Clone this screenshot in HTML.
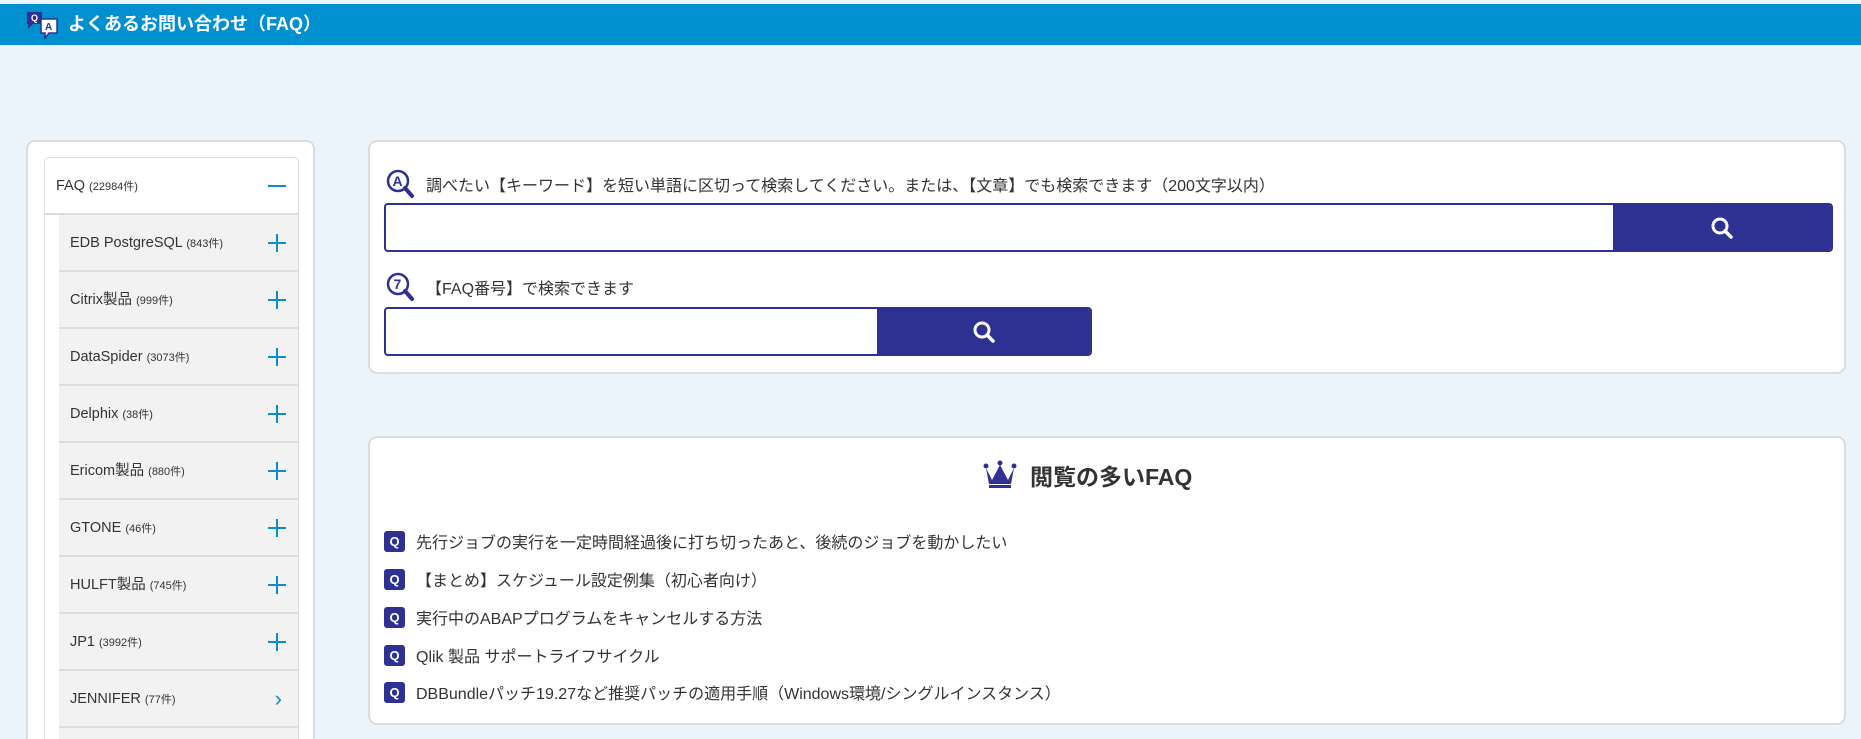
<!DOCTYPE html>
<html><head><meta charset="utf-8"><style>
*{box-sizing:border-box;margin:0;padding:0}
html,body{width:1861px;height:739px;overflow:hidden}
body{background:#ecf4fb;font-family:"Liberation Sans","Noto Sans CJK JP",sans-serif;color:#333}
#wrap{position:relative;width:1861px;height:739px;overflow:hidden}
.hdr{position:absolute;left:0;top:4px;width:1861px;height:41px;background:#008fcf;color:#fff;font-weight:bold;font-size:18px;line-height:41px;padding-left:68px}
.hdr svg{position:absolute;left:26px;top:7px}
.side{position:absolute;left:26px;top:140px;width:289px;height:599px;background:#fff;border:2px solid #dcdcdc;border-bottom:none;border-radius:9px 9px 0 0;overflow:hidden}
.inner{position:absolute;left:16px;top:15px;width:255px;height:590px;border:1px solid #ddd;border-bottom:none;border-radius:5px 5px 0 0;overflow:hidden}
.row{position:relative;height:57px;line-height:56px;font-size:14.5px;border-bottom:2px solid #ddd;padding-left:11px;background:#fff}
.sub{margin-left:14px;background:#f2f2f2;padding-left:11px}
.row small{font-size:11px}
.ic{position:absolute;right:12px;top:14px;width:18px;height:28px}
.ic::before{content:"";position:absolute;left:0;top:13px;width:18px;height:2px;background:#0a8ccf}
.pl::after{content:"";position:absolute;left:8px;top:5px;width:2px;height:18px;background:#0a8ccf}
.ch{position:absolute;right:16px;top:0;color:#0a8ccf;font-size:22px}
.card{position:absolute;left:368px;width:1478px;background:#fff;border:2px solid #dcdcdc;border-radius:9px}
.lbl{position:absolute;left:16px;font-size:16px;display:flex;align-items:center}
.lbl svg{margin-right:10px}
.inp{position:absolute;left:14px;height:49px;border:2px solid #2e3192;border-radius:4px;background:#fff;overflow:hidden}
.btn{position:absolute;right:0;top:0;bottom:0;background:#2e3192;display:flex;align-items:center;justify-content:center}
.q{position:absolute;left:14px;font-size:16px;display:flex;align-items:center}
.q b{display:inline-block;width:21px;height:21px;background:#2e3192;color:#fff;border-radius:3px;font-size:13px;text-align:center;line-height:21px;margin-right:11px}
</style></head><body><div id="wrap">
<div class="hdr"><svg width="36" height="30" viewBox="0 0 36 30"><path d="M1 1h15v12H7l-5 5V13H1z" fill="#2e3192"/><text x="5" y="10" font-size="9" fill="#fff" font-family="Liberation Sans" font-weight="bold">Q</text><path d="M15 8h16v14h-8l-4 5v-5h-4z" fill="#fff" stroke="#2e3192" stroke-width="1.5"/><text x="19" y="19" font-size="10" fill="#2e3192" font-family="Liberation Sans" font-weight="bold">A</text></svg>よくあるお問い合わせ（FAQ）</div>

<div class="side"><div class="inner">
<div class="row">FAQ <small>(22984件)</small><span class="ic"></span></div>
<div class="row sub">EDB PostgreSQL <small>(843件)</small><span class="ic pl"></span></div>
<div class="row sub">Citrix製品 <small>(999件)</small><span class="ic pl"></span></div>
<div class="row sub">DataSpider <small>(3073件)</small><span class="ic pl"></span></div>
<div class="row sub">Delphix <small>(38件)</small><span class="ic pl"></span></div>
<div class="row sub">Ericom製品 <small>(880件)</small><span class="ic pl"></span></div>
<div class="row sub">GTONE <small>(46件)</small><span class="ic pl"></span></div>
<div class="row sub">HULFT製品 <small>(745件)</small><span class="ic pl"></span></div>
<div class="row sub">JP1 <small>(3992件)</small><span class="ic pl"></span></div>
<div class="row sub">JENNIFER <small>(77件)</small><span class="ch">›</span></div>
<div class="row sub" style="height:60px;border-bottom:none"></div>
</div></div>

<div class="card" style="top:140px;height:234px">
<div class="lbl" style="top:27px"><svg width="30" height="30" viewBox="0 0 30 30"><circle cx="12" cy="12" r="10" fill="#fff" stroke="#2e3192" stroke-width="2.5"/><text x="6.5" y="17" font-size="14" font-weight="bold" fill="#2e3192" font-family="Liberation Sans">A</text><path d="M19 19l7 8" stroke="#2e3192" stroke-width="4" stroke-linecap="round"/></svg>調べたい【キーワード】を短い単語に区切って検索してください。または、【文章】でも検索できます（200文字以内）</div>
<div class="inp" style="top:61px;width:1449px"><div class="btn" style="width:218px"><svg width="24" height="24" viewBox="0 0 24 24"><circle cx="10" cy="10" r="7" fill="none" stroke="#fff" stroke-width="3"/><path d="M15 15l6 6" stroke="#fff" stroke-width="3.5" stroke-linecap="round"/></svg></div></div>
<div class="lbl" style="top:130px"><svg width="30" height="30" viewBox="0 0 30 30"><circle cx="12" cy="12" r="10" fill="#fff" stroke="#2e3192" stroke-width="2.5"/><text x="7.5" y="17" font-size="14" font-weight="bold" fill="#2e3192" font-family="Liberation Sans">7</text><path d="M19 19l7 8" stroke="#2e3192" stroke-width="4" stroke-linecap="round"/></svg>【FAQ番号】で検索できます</div>
<div class="inp" style="top:165px;width:708px"><div class="btn" style="width:213px"><svg width="24" height="24" viewBox="0 0 24 24"><circle cx="10" cy="10" r="7" fill="none" stroke="#fff" stroke-width="3"/><path d="M15 15l6 6" stroke="#fff" stroke-width="3.5" stroke-linecap="round"/></svg></div></div>
</div>

<div class="card" style="top:436px;height:289px">
<div style="position:absolute;left:613px;top:20px;display:flex;align-items:center;font-size:23px;font-weight:bold;color:#333"><svg width="34" height="30" viewBox="0 0 34 30" style="margin-right:13px"><circle cx="3" cy="6" r="2.5" fill="#2e3192"/><circle cx="17" cy="3" r="2.5" fill="#2e3192"/><circle cx="31" cy="6" r="2.5" fill="#2e3192"/><path d="M3 8l6 12 8-15 8 15 6-12-3 16H6z" fill="#2e3192"/><rect x="6" y="25" width="22" height="3" fill="#2e3192"/></svg>閲覧の多いFAQ</div>
<div class="q" style="top:91px"><b>Q</b>先行ジョブの実行を一定時間経過後に打ち切ったあと、後続のジョブを動かしたい</div>
<div class="q" style="top:129px"><b>Q</b>【まとめ】スケジュール設定例集（初心者向け）</div>
<div class="q" style="top:167px"><b>Q</b>実行中のABAPプログラムをキャンセルする方法</div>
<div class="q" style="top:205px"><b>Q</b>Qlik 製品 サポートライフサイクル</div>
<div class="q" style="top:242px"><b>Q</b>DBBundleパッチ19.27など推奨パッチの適用手順（Windows環境/シングルインスタンス）</div>
</div>
</div></body></html>
